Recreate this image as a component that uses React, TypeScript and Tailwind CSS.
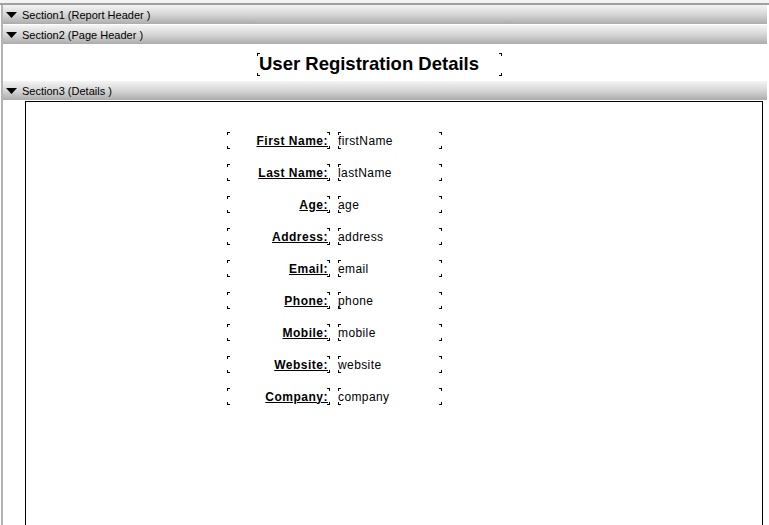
import React from 'react'

const fields = [
  ['First Name:', 'firstName'],
  ['Last Name:', 'lastName'],
  ['Age:', 'age'],
  ['Address:', 'address'],
  ['Email:', 'email'],
  ['Phone:', 'phone'],
  ['Mobile:', 'mobile'],
  ['Website:', 'website'],
  ['Company:', 'company'],
]

// little L-shaped marks at the corners of a report control
function Marks() {
  return (
    <>
      <span className="absolute left-0 top-0 w-[3px] h-[3px] border-l border-t border-black" />
      <span className="absolute right-0 top-0 w-[3px] h-[3px] border-r border-t border-black" />
      <span className="absolute left-0 bottom-0 w-[3px] h-[3px] border-l border-b border-black" />
      <span className="absolute right-0 bottom-0 w-[3px] h-[3px] border-r border-b border-black" />
    </>
  )
}

function SectionBar({ label }: { label: string }) {
  return (
    <div className="h-[20px] flex items-center pt-px bg-gradient-to-b from-[#f4f4f4] via-[#d6d6d6] to-[#acacac] border-b border-white">
      <svg width="11" height="6" viewBox="0 0 11 6" className="ml-[3px] mr-[5px]">
        <path d="M0 0 L11 0 L5.5 6 Z" fill="#000" />
      </svg>
      <span className="text-[11px] text-black leading-none">{label}</span>
    </div>
  )
}

export default function App() {
  return (
    <div className="w-[769px] h-[525px] overflow-hidden bg-white flex flex-col" style={{ fontFamily: '"Liberation Sans", Arial, sans-serif' }}>
      <div className="h-[3px] bg-[#f4f4f4]" />
      <div className="h-[2px] bg-[#a0a0a0]" />
      <div className="flex-1 flex flex-col border-l-2 border-[#b4b4b4] ml-px mr-[2px]">
        <SectionBar label="Section1 (Report Header  )" />
        <SectionBar label="Section2 (Page Header  )" />
        <div className="h-[36px] flex items-center bg-white">
          <div className="relative w-[245px] h-[23px] ml-[254px] mt-[2px] flex items-center px-[2px]">
            <Marks />
            <span className="text-[18.5px] font-bold text-black leading-none">User Registration Details</span>
          </div>
        </div>
        <SectionBar label="Section3 (Details  )" />
        <div className="flex-1 ml-[22px] mr-[4px] border-l border-t border-r border-black bg-white pt-[30px]">
          <div className="flex flex-col gap-[15px] ml-[201px]">
            {fields.map(([label, value]) => (
              <div key={value} className="flex gap-[8px]">
                <div className="relative w-[103px] h-[17px] flex items-center justify-end pr-[2px]">
                  <Marks />
                  <span className="text-[12px] font-bold underline tracking-[0.5px] text-black leading-none">{label}</span>
                </div>
                <div className="relative w-[104px] h-[17px] flex items-center">
                  <Marks />
                  <span className="text-[12px] tracking-[0.4px] text-black leading-none">{value}</span>
                </div>
              </div>
            ))}
          </div>
        </div>
      </div>
    </div>
  )
}
